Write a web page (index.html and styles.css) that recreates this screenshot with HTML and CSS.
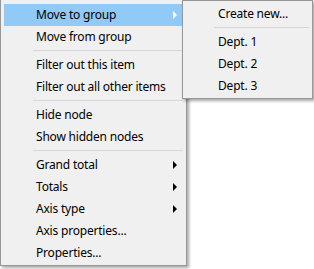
FILE: index.html
```html
<!DOCTYPE html>
<html>
<head>
<meta charset="utf-8">
<link rel="stylesheet" href="styles.css">
</head>
<body>
<div class="scene">
  <div class="menu main">
    <div class="item active has-sub"><span class="label">Move to group</span><span class="arrow"></span></div>
    <div class="item"><span class="label">Move from group</span></div>
    <div class="sep"></div>
    <div class="item"><span class="label">Filter out this item</span></div>
    <div class="item"><span class="label">Filter out all other items</span></div>
    <div class="sep"></div>
    <div class="item"><span class="label">Hide node</span></div>
    <div class="item"><span class="label">Show hidden nodes</span></div>
    <div class="sep"></div>
    <div class="item has-sub"><span class="label">Grand total</span><span class="arrow"></span></div>
    <div class="item has-sub"><span class="label">Totals</span><span class="arrow"></span></div>
    <div class="item has-sub"><span class="label">Axis type</span><span class="arrow"></span></div>
    <div class="item"><span class="label">Axis properties...</span></div>
    <div class="item"><span class="label">Properties...</span></div>
  </div>
  <div class="menu sub">
    <div class="item"><span class="label">Create new...</span></div>
    <div class="sep"></div>
    <div class="item"><span class="label">Dept. 1</span></div>
    <div class="item"><span class="label">Dept. 2</span></div>
    <div class="item"><span class="label">Dept. 3</span></div>
  </div>
</div>
</body>
</html>
```
FILE: styles.css
```css
html, body {
  margin: 0;
  padding: 0;
}
body {
  width: 314px;
  height: 269px;
  overflow: hidden;
  background-color: #ffffff;
  background-image:
    linear-gradient(#a0a0a0, #a0a0a0),
    linear-gradient(#a0a0a0, #a0a0a0);
  background-size: 1px 2px, 1px 2px;
  background-position: 187px 0, 299px 0;
  background-repeat: no-repeat;
  font-family: "Noto Sans", "Open Sans", sans-serif;
  font-size: 12px;
  letter-spacing: -0.2px;
  color: #000;
}
.scene {
  position: relative;
  width: 314px;
  height: 269px;
}
.menu {
  background: #f0f0f0;
  border: 1px solid #979797;
  box-shadow: 2px 2px 3px rgba(0, 0, 0, 0.35);
  box-sizing: border-box;
}
.main {
  width: 187px;
  margin-top: -1px;
  padding: 4px 3px 1px 3px;
}
.sub {
  position: absolute;
  left: 182px;
  top: 1px;
  width: 131px;
  padding: 2px 3px 1px 2px;
}
.item {
  height: 22px;
  display: flex;
  align-items: center;
  padding-left: 32px;
  padding-right: 6px;
}
.sub .item {
  padding-left: 33px;
}
.label {
  flex: 1;
  white-space: nowrap;
  line-height: 22px;
}
.item.active {
  background: #91c9f7;
}
.arrow {
  width: 0;
  height: 0;
  border-left: 4px solid #000;
  border-top: 4px solid transparent;
  border-bottom: 4px solid transparent;
}
.item.active .arrow {
  border-left-color: #ffffff;
}
.sep {
  height: 1px;
  background: #d7d7d7;
  margin: 2px 0 3px 29px;
}
.sub .sep {
  margin: 2px 0 3px 29px;
}
```
